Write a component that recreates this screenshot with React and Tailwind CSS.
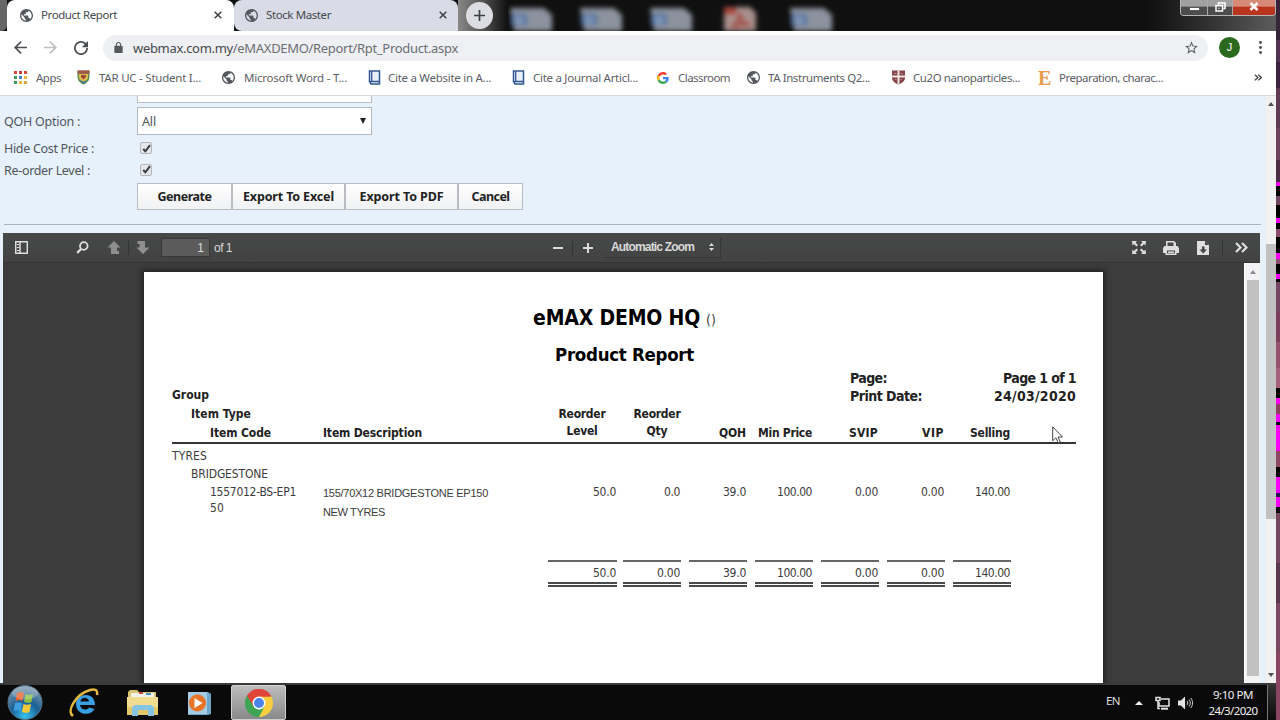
import React, { useLayoutEffect, useRef } from "react";

// Single-line label whose letter spacing is adjusted so it spans exactly `w` pixels.
function Txt({ w, className = "", children }) {
  const ref = useRef(null);
  useLayoutEffect(() => {
    const el = ref.current;
    el.style.letterSpacing = "0px";
    const natural = el.getBoundingClientRect().width;
    el.style.letterSpacing = (w - natural) / el.textContent.length + "px";
  }, [w, children]);
  return (
    <span ref={ref} className={"inline-block whitespace-nowrap " + className}>
      {children}
    </span>
  );
}

function Globe() {
  return (
    <svg viewBox="2 2 20 20" className="size-[13px]" fill="#55585d">
      <path d="M12 2C6.48 2 2 6.48 2 12s4.48 10 10 10 10-4.48 10-10S17.52 2 12 2zm-1 17.93c-3.95-.49-7-3.85-7-7.93 0-.62.08-1.21.21-1.79L9 15v1c0 1.1.9 2 2 2v1.93zm6.9-2.54c-.26-.81-1-1.39-1.9-1.39h-1v-3c0-.55-.45-1-1-1H8v-2h2c.55 0 1-.45 1-1V7h2c1.1 0 2-.9 2-2v-.41c2.93 1.19 5 4.06 5 7.41 0 2.08-.8 3.97-2.1 5.39z" />
    </svg>
  );
}

function CloseX() {
  return (
    <svg viewBox="0 0 8 8" className="size-2" stroke="#3c4043" strokeWidth="1.5">
      <path d="M.7.7l6.6 6.6M7.3.7L.7 7.3" />
    </svg>
  );
}

function AppsIcon() {
  const c = ["#e0483c", "#c8443a", "#d9483c", "#3f9a55", "#4a7fd0", "#e8b93a", "#3f9a55", "#e8b93a", "#dba63a"];
  return (
    <svg viewBox="0 0 13 13" className="size-[13px]">
      {c.map((f, i) => (
        <rect key={i} x={(i % 3) * 5} y={Math.floor(i / 3) * 5} width="3" height="3" fill={f} />
      ))}
    </svg>
  );
}

function Crest() {
  return (
    <svg viewBox="0 0 13 15" className="h-[15px] w-[13px]">
      <path d="M.5.5h12v6c0 4-2.500 6.500-6 8-3.500-1.500-6-4-6-8z" fill="#5f8a50" />
      <path d="M.5.5h12v3.200H.5z" fill="#a8564a" />
      <path d="M2 4h9v3c0 2.500-2 4-4.500 5.500C4 11 2 9.500 2 7z" fill="#d8c04a" />
      <path d="M4 5h5v2L6.500 9.500 4 7z" fill="#a5443c" />
      <path d="M2.500 10l4 1.500 4-1.500-4 4z" fill="#3f7f9a" />
    </svg>
  );
}

function Book() {
  return (
    <svg viewBox="0 0 13 15" className="h-[15px] w-[13px]" fill="none">
      <path d="M1.500 12.500V1h10v10.500H3a1.500 1.500 0 000 2.500h8.500v-2" fill="#e9f0fa" stroke="#31558f" strokeWidth="1.500" />
      <path d="M3.700 1.500v10" stroke="#31558f" strokeWidth="1.300" />
    </svg>
  );
}

function GoogleG() {
  return (
    <svg viewBox="0 0 48 48" className="size-3">
      <path fill="#EA4335" d="M24 9.500c3.540 0 6.710 1.220 9.210 3.600l6.850-6.850C35.900 2.380 30.470 0 24 0 14.620 0 6.510 5.380 2.560 13.220l7.980 6.190C12.430 13.720 17.740 9.500 24 9.500z" />
      <path fill="#4285F4" d="M46.980 24.550c0-1.570-.15-3.090-.38-4.550H24v9.020h12.940c-.58 2.960-2.260 5.480-4.780 7.180l7.730 6c4.510-4.180 7.090-10.360 7.090-17.650z" />
      <path fill="#FBBC05" d="M10.530 28.590A14.500 14.500 0 019.770 24c0-1.600.27-3.140.76-4.590l-7.980-6.190A24 24 0 000 24c0 3.880.92 7.540 2.560 10.780z" />
      <path fill="#34A853" d="M24 48c6.480 0 11.930-2.130 15.890-5.810l-7.730-6c-2.150 1.450-4.920 2.300-8.160 2.300-6.260 0-11.570-4.220-13.470-9.910l-7.980 6.190C6.510 42.620 14.620 48 24 48z" />
    </svg>
  );
}

function RedShield() {
  return (
    <svg viewBox="0 0 13 15" className="h-[15px] w-[13px]">
      <path d="M0 .5h13v7c0 3.500-2.500 5.500-6.500 7-4-1.500-6.500-3.500-6.500-7z" fill="#85434a" />
      <path d="M6.500.5v14M0 6.500h13" stroke="#efe3e0" strokeWidth="2" />
      <path d="M2 3.500h2.500M8.500 3.500H11M3 9.500h1.500M8.500 9.500H10" stroke="#b58a86" />
    </svg>
  );
}

const bookmarks = [
  { slot: "w-[63px]", gap: "w-[22px]", icon: <AppsIcon />, label: "Apps", w: 25 },
  { slot: "w-[145px]", gap: "w-[22px]", icon: <Crest />, label: "TAR UC - Student I...", w: 102 },
  { slot: "w-[146px]", gap: "w-[22px]", icon: <Globe />, label: "Microsoft Word - T...", w: 103 },
  { slot: "w-[144px]", gap: "w-5", icon: <Book />, label: "Cite a Website in A...", w: 103 },
  { slot: "w-[145px]", gap: "w-[21px]", icon: <Book />, label: "Cite a Journal Articl...", w: 105 },
  { slot: "w-[90px]", gap: "w-[21px]", icon: <GoogleG />, label: "Classroom", w: 52 },
  { slot: "w-[145px]", gap: "w-[21px]", icon: <Globe />, label: "TA Instruments Q2...", w: 102 },
  { slot: "w-[146px]", gap: "w-[21px]", icon: <RedShield />, label: "Cu2O nanoparticles...", w: 107 },
  {
    slot: "w-[215px]",
    gap: "w-[21px]",
    icon: <span className="font-['Liberation_Serif',serif] text-[20px] font-bold leading-[16px] text-[#e99a4a]">E</span>,
    label: "Preparation, charac...",
    w: 104,
  },
];

function DesktopDoc({ pdf }) {
  return (
    <svg viewBox="0 0 44 26" className="h-[26px] w-11 blur-[2.500px]">
      {pdf ? (
        <>
          <path d="M6 2h26l6 6v18H6z" fill="#a8908c" />
          <path d="M6 2h12v7H6z" fill="#a8443c" />
          <path d="M14 22c6-4 8-9 7-14 2 8 5 11 11 12-6-1-12 0-18 2z" fill="none" stroke="#a5342e" strokeWidth="2" />
        </>
      ) : (
        <>
          <path d="M2 3h34l8 7v16H6z" fill="#8d939e" />
          <path d="M3 9h16v11H3z" fill="#53729f" />
          <path d="M6 12l3 6 2-6 2 6 3-6" stroke="#a3b3cb" strokeWidth="1.500" fill="none" />
        </>
      )}
    </svg>
  );
}

function TabStrip() {
  return (
    <div className="flex h-[31px] bg-[#101010]">
      <div className="w-[7px] rounded-br-md bg-[#666]" />
      <div className="flex w-[227px] items-center rounded-t-lg bg-white pb-px pl-[13px]">
        <Globe />
        <Txt w={76} className="ml-2 text-[11.5px] leading-4 text-[#45484d]">Product Report</Txt>
        <div className="ml-[97px]"><CloseX /></div>
      </div>
      <div className="flex w-[224px] items-center rounded-t-lg rounded-bl-lg bg-[#d9dce6] pb-px pl-[11px]">
        <Globe />
        <Txt w={65} className="ml-2 text-[11.5px] leading-4 text-[#45484d]">Stock Master</Txt>
        <div className="ml-[108px]"><CloseX /></div>
      </div>
      <div className="flex w-[50px] items-center bg-linear-to-r from-[#888] via-[#555] to-[#101010] pb-px pl-2">
        <div className="flex size-[27px] items-center justify-center rounded-full bg-[#dcdde3]">
          <svg viewBox="0 0 11 11" className="size-[11px]" stroke="#3c4043" strokeWidth="1.700"><path d="M5.500 0v11M0 5.500h11" /></svg>
        </div>
      </div>
      <div className="flex w-[340px] items-end gap-[26px] overflow-hidden">
        <DesktopDoc />
        <DesktopDoc />
        <DesktopDoc />
        <DesktopDoc pdf />
        <DesktopDoc />
      </div>
      <div className="flex flex-1 items-start justify-end bg-linear-to-r from-[#101010] from-70% to-[#5c5c5c]">
        <div className="flex h-4 overflow-hidden rounded-b-[4px] border border-t-0 border-[#b5b5b5]">
          <div className="flex w-[27px] items-center justify-center border-r border-[#aaa] bg-linear-to-b from-[#a0a0a0] from-40% to-[#4c4c4c] to-50%">
            <div className="mt-[2px] h-[4px] w-[11px] border border-[#555] bg-white" />
          </div>
          <div className="flex w-[25px] items-center justify-center border-r border-[#aaa] bg-linear-to-b from-[#a0a0a0] from-40% to-[#4c4c4c] to-50%">
            <svg viewBox="0 0 11 10" className="mb-[2px] h-[10px] w-[11px]" fill="none" stroke="#fff" strokeWidth="1.500"><path d="M3.500 2.500V1H10v5.500H8.500M1 3.500h6.500V9H1zM4 5.700v1" /></svg>
          </div>
          <div className="flex w-[42px] items-center justify-center bg-linear-to-b from-[#d88a78] from-40% to-[#b8341c] to-50%">
            <svg viewBox="0 0 10 9" className="mb-[2px] h-[9px] w-[10px]" stroke="#fff" strokeWidth="2.600"><path d="M1.500 1l7 7M8.500 1l-7 7" /></svg>
          </div>
        </div>
      </div>
    </div>
  );
}

function AddressBar() {
  return (
    <div className="flex h-[31px] items-center bg-white pt-[2px]">
      <svg viewBox="4 4 16 16" className="ml-[14px] size-[13px]" fill="#4a4d51"><path d="M20 11H7.830l5.590-5.590L12 4l-8 8 8 8 1.410-1.410L7.830 13H20v-2z" /></svg>
      <svg viewBox="4 4 16 16" className="ml-[17px] size-[13px]" fill="#bdbfc2"><path d="M12 4l-1.410 1.410L16.170 11H4v2h12.170l-5.580 5.590L12 20l8-8z" /></svg>
      <svg viewBox="4 4 16 16" className="ml-[17px] size-[14px]" fill="#4a4d51"><path d="M17.650 6.350A7.960 7.960 0 0012 4a8 8 0 108 8h-2a6 6 0 11-6-6c1.660 0 3.140.69 4.220 1.780L13 11h7V4l-2.350 2.350z" /></svg>
      <div className="ml-[15px] flex h-[26px] w-[1105px] items-center rounded-full bg-[#eff0f3] pl-[11px] pr-[10px]">
        <svg viewBox="4 1 16 21" className="h-[11px] w-[9px]" fill="#55585d"><path d="M18 8h-1V6c0-2.760-2.240-5-5-5S7 3.240 7 6v2H6c-1.100 0-2 .9-2 2v10c0 1.100.9 2 2 2h12c1.100 0 2-.9 2-2V10c0-1.100-.9-2-2-2zM9 8V6a3 3 0 016 0v2z" /></svg>
        <Txt w={325} className="ml-[10px] text-[13px] leading-5 text-[#6b6e73]">
          <span className="text-[#46494e]">webmax.com.my</span>/eMAXDEMO/Report/Rpt_Product.aspx
        </Txt>
        <div className="flex-1" />
        <svg viewBox="2 2 20 19" className="size-[13px]" fill="#5b5e63"><path d="M22 9.240l-7.190-.62L12 2 9.190 8.630 2 9.240l5.460 4.730L5.820 21 12 17.270 18.180 21l-1.630-7.030L22 9.240zM12 15.400l-3.760 2.270 1-4.280-3.320-2.880 4.380-.38L12 6.100l1.710 4.040 4.380.38-3.320 2.880 1 4.280L12 15.400z" /></svg>
      </div>
      <div className="ml-[11px] flex size-[21px] items-center justify-center rounded-full bg-[#2b6a1d] pb-px font-['Liberation_Sans',sans-serif] text-[11px] leading-none text-white">J</div>
      <svg viewBox="0 0 3 13" className="ml-[19px] h-[13px] w-[3px]" fill="#4a4d51"><circle cx="1.500" cy="1.500" r="1.400" /><circle cx="1.500" cy="6.500" r="1.400" /><circle cx="1.500" cy="11.500" r="1.400" /></svg>
    </div>
  );
}

function Bookmarks() {
  return (
    <div className="flex h-[34px] items-center border-b border-[#d7dbe0] bg-white pb-[2px] pl-[14px]">
      {bookmarks.map((b, i) => (
        <div key={i} className={"flex shrink-0 items-center " + b.slot}>
          <div className={"flex shrink-0 items-center " + b.gap}>{b.icon}</div>
          <Txt w={b.w} className="text-[11.5px] leading-4 text-[#5d6065]">{b.label}</Txt>
        </div>
      ))}
      <svg viewBox="0 0 8 7" className="ml-px h-[7px] w-2" fill="none" stroke="#3c4043" strokeWidth="1.300"><path d="M.8.600l3 2.900-3 2.900M4.200.600l3 2.900-3 2.900" /></svg>
    </div>
  );
}

function Check() {
  return (
    <div className="mb-px flex size-3 items-center justify-center rounded-[2px] border border-[#b4b8bd] bg-[#e4e6ea]">
      <svg viewBox="0 0 9 9" className="size-[9px] shrink-0" fill="none" stroke="#3a3d42" strokeWidth="2"><path d="M1.200 5l2.200 2.300L8 1.200" /></svg>
    </div>
  );
}

const btn = "flex h-[27px] items-center justify-center border border-[#b9bdc3] bg-linear-to-b from-white to-[#f0f1f3] pt-px text-[12.500px] font-bold text-[#222]";

function FilterForm() {
  return (
    <div className="flex h-[137px] flex-col text-[#50555b]">
      <div className="ml-[137px] h-[7px] w-[235px] border border-t-0 border-[#b9bfc6] bg-white" />
      <div className="mt-1 flex h-7 items-center pl-1 text-[12.500px]">
        <div className="w-[133px] pt-[2px]"><Txt w={76}>QOH Option :</Txt></div>
        <div className="flex h-7 w-[235px] items-center justify-between border border-[#b3b9c0] bg-white pl-1 pr-[5px]">
          <Txt w={14} className="mt-[3px]">All</Txt>
          <svg viewBox="0 0 6 6" className="size-[6px]" fill="#222"><path d="M0 0h6L3 6z" /></svg>
        </div>
      </div>
      <div className="mt-[3px] flex h-[21px] items-center pl-1 text-[12.500px]">
        <div className="w-[136px] pt-[2px]"><Txt w={90}>Hide Cost Price :</Txt></div>
        <Check />
      </div>
      <div className="flex h-[22px] items-center pl-1 text-[12.500px]">
        <div className="w-[136px] pt-[2px]"><Txt w={86}>Re-order Level :</Txt></div>
        <Check />
      </div>
      <div className="mt-[2px] flex pl-[137px]">
        <div className={btn + " w-[95px]"}><Txt w={54}>Generate</Txt></div>
        <div className={btn + " w-[113px]"}><Txt w={91}>Export To Excel</Txt></div>
        <div className={btn + " w-[113px]"}><Txt w={84}>Export To PDF</Txt></div>
        <div className={btn + " w-[65px]"}><Txt w={38}>Cancel</Txt></div>
      </div>
      <div className="ml-1 mt-[14px] h-px w-[1257px] bg-[#a9b3c2]" />
    </div>
  );
}

function PdfToolbar() {
  return (
    <div className="flex h-[30px] items-center border-b border-[#353535] bg-linear-to-b from-[#474949] to-[#424242] font-['Liberation_Sans',sans-serif] text-[12px] font-bold text-[#d9d9d9]">
      <svg viewBox="0 0 13 13" className="ml-3 size-[13px]" fill="none" stroke="#dedede" strokeWidth="1.500"><path d="M.7.7h11.600v11.600H.7zM5 1v11" /><path d="M2 3.500h2M2 6.500h2M2 9.500h2" strokeWidth="1" /></svg>
      <svg viewBox="0 0 13 13" className="ml-[48px] size-[13px]" fill="none" stroke="#dedede"><circle cx="7.800" cy="5" r="3.800" strokeWidth="1.800" /><path d="M5 8L1.200 11.800" strokeWidth="2.400" /></svg>
      <svg viewBox="0 0 14 13" className="ml-[18px] h-[13px] w-[14px]" fill="#8f8f8f"><path d="M7 0l6.500 6.500H10V10h2v3H4V6.500H.5z" /></svg>
      <div className="ml-[7px] h-[14px] w-px bg-[#343434]" />
      <svg viewBox="0 0 14 13" className="ml-[7px] h-[13px] w-[14px]" fill="#8f8f8f"><path d="M1.500 0H9v6.500h4.500L7 13 .5 6.500h3V3h-2z" /></svg>
      <div className="ml-[11px] flex h-[19px] w-[49px] items-center justify-end border border-[#383838] bg-[#5b5b5b] pr-[5px] font-normal">1</div>
      <Txt w={18} className="ml-1 font-normal">of 1</Txt>
      <div className="ml-[321px] h-[2px] w-[10px] bg-[#dcdcdc]" />
      <div className="ml-[9px] h-[14px] w-px bg-[#343434]" />
      <svg viewBox="0 0 10 10" className="ml-[10px] size-[10px]" stroke="#dcdcdc" strokeWidth="2"><path d="M5 0v10M0 5h10" /></svg>
      <div className="ml-3 flex h-5 w-[116px] items-center justify-between border-b border-r border-[#373737] pl-[6px] pr-[6px]">
        <Txt w={83} className="text-[12px]">Automatic Zoom</Txt>
        <svg viewBox="0 0 5 8" className="h-2 w-[5px]" fill="#dcdcdc"><path d="M0 3L2.500 0 5 3zM0 5h5L2.500 8z" /></svg>
      </div>
      <div className="flex-1" />
      <svg viewBox="0 0 14 13" className="h-[13px] w-[14px]" fill="#dedede"><path d="M0 0h5L3.500 1.500 6 4 4.500 5.500 2 3 .5 4.500zM14 0H9l1.500 1.500L8 4l1.500 1.500L12 3l1.500 1.500zM0 13h5l-1.500-1.500L6 9 4.500 7.500 2 10 .5 8.500zM14 13H9l1.500-1.500L8 9l1.500-1.500L12 10l1.500-1.500z" /></svg>
      <svg viewBox="0 0 16 14" className="ml-[17px] h-[14px] w-4" fill="#dedede"><path d="M3 0h8l2 2v3h1.500L16 7v5h-2.500v2h-11v-2H0V7l1.500-2H3z" /><path d="M4.500 1.500h6v3.500h-6zM4 9.500h8v3H4z" fill="#4a4a4a" /><path d="M5 10.500h6v1.500H5z" fill="#dedede" /></svg>
      <svg viewBox="0 0 12 14" className="ml-[18px] h-[14px] w-3" fill="#dedede"><path d="M0 0h8l4 4v10H0z" /><path d="M8 0l4 4H8zM5 5.500h2.500v3H10L6.200 12.500 2.500 8.500H5z" fill="#444" /></svg>
      <div className="ml-[13px] h-[16px] w-px bg-[#343434]" />
      <svg viewBox="0 0 13 11" className="ml-[12px] mr-3 h-[11px] w-[13px]" fill="none" stroke="#dedede" strokeWidth="2.200"><path d="M1 1l4.500 4.500L1 10M7 1l4.500 4.500L7 10" /></svg>
    </div>
  );
}

const columns = "grid grid-cols-[75px_66px_66px_66px_66px_66px_58px]";
const numbers = [
  ["50.0", "50.0", 23, 23, "w-[68px]", "w-[69px]"],
  ["0.0", "0.00", 16, 23, "w-[57px]", "w-[58px]"],
  ["39.0", "39.0", 23, 23, "w-[57px]", "w-[58px]"],
  ["100.00", "100.00", 35, 35, "w-[57px]", "w-[58px]"],
  ["0.00", "0.00", 23, 23, "w-[57px]", "w-[58px]"],
  ["0.00", "0.00", 23, 23, "w-[57px]", "w-[58px]"],
  ["140.00", "140.00", 35, 35, "w-[57px]", "w-[58px]"],
];
const heads = [["QOH", 27], ["Min Price", 54], ["SVIP", 29], ["VIP", 22], ["Selling", 40]];

function Report() {
  return (
    <div className="ml-[141px] mt-[9px] h-[411px] w-[959px] bg-white pl-7 pt-[31px] font-['DejaVu_Sans_Condensed','DejaVu_Sans',sans-serif] text-[12px] text-[#3c3c3c] shadow-[0_0_5px_2px_rgba(15,15,15,0.6)]">
      <div className="flex h-[30px] items-center pl-[361px]">
        <Txt w={167} className="text-[21px] font-bold leading-[30px] text-black">eMAX DEMO HQ</Txt>
        <Txt w={10} className="ml-[6px] mt-1 text-[14px]">()</Txt>
      </div>
      <div className="mt-2 flex h-7 items-center pl-[383px]">
        <Txt w={139} className="text-[18.500px] font-bold text-black">Product Report</Txt>
      </div>
      <div className="flex h-[75px] w-[904px] border-b-2 border-[#333] font-bold text-[#222]">
        <div className="w-[376px] pt-[17px] leading-[19px]">
          <div><Txt w={37}>Group</Txt></div>
          <div className="pl-[19px]"><Txt w={60}>Item Type</Txt></div>
          <div className="flex pl-[38px]">
            <div className="w-[113px]"><Txt w={61}>Item Code</Txt></div>
            <Txt w={99}>Item Description</Txt>
          </div>
        </div>
        <div className="w-[528px]">
          <div className="flex h-[18px] justify-between pl-[302px] text-[14px] leading-[18px]">
            <Txt w={37}>Page:</Txt>
            <Txt w={73}>Page 1 of 1</Txt>
          </div>
          <div className="flex h-[18px] justify-between pl-[302px] text-[14px] leading-[19px]">
            <Txt w={72}>Print Date:</Txt>
            <Txt w={82}>24/03/2020</Txt>
          </div>
          <div className={columns}>
            <div className="flex w-[68px] flex-col items-center pt-px leading-[17px]"><Txt w={47}>Reorder</Txt><Txt w={31}>Level</Txt></div>
            <div className="flex w-[68px] flex-col items-center pt-px leading-[17px]"><Txt w={47}>Reorder</Txt><Txt w={21}>Qty</Txt></div>
            {heads.map(([t, w]) => (
              <div key={t} className="w-[57px] pt-[19px] text-right leading-[18px]"><Txt w={w}>{t}</Txt></div>
            ))}
          </div>
        </div>
      </div>
      <div className="pt-[3px] leading-[18px]">
        <div><Txt w={35}>TYRES</Txt></div>
        <div className="pl-[19px]"><Txt w={77}>BRIDGESTONE</Txt></div>
        <div className="flex h-[77px]">
          <div className="flex w-[113px] flex-col items-start pl-[38px]">
            <Txt w={86}>1557012-BS-EP1</Txt>
            <Txt w={14} className="leading-[15px]">50</Txt>
          </div>
          <div className="ml-[38px] w-[225px] pt-px font-['Liberation_Sans',sans-serif] text-[11px] leading-[18px]">
            <div className="h-[19px]"><Txt w={165}>155/70X12 BRIDGESTONE EP150</Txt></div>
            <div><Txt w={62}>NEW TYRES</Txt></div>
          </div>
          <div className={columns}>
            {numbers.map((n, i) => (
              <div key={i} className={"text-right " + n[4]}><Txt w={n[2]}>{n[0]}</Txt></div>
            ))}
          </div>
        </div>
      </div>
      <div className={"pl-[376px] " + columns}>
        {numbers.map((n, i) => (
          <div key={i} className={n[5]}>
            <div className="h-[2px] bg-[#666]" />
            <div className={"h-5 pt-[2px] text-right leading-[18px] " + n[4]}><Txt w={n[3]}>{n[1]}</Txt></div>
            <div className="h-[5px] border-y-2 border-[#4a4a4a]" />
          </div>
        ))}
      </div>
    </div>
  );
}

function Taskbar() {
  return (
    <div className="flex h-[37px] items-center border-t-2 border-[#3a3a3a] bg-[#0a0a0a]">
      <svg viewBox="0 0 36 35" className="ml-[7px] h-[35px] w-9">
        <defs>
          <radialGradient id="orb" cx="50%" cy="90%" r="85%"><stop offset="0" stopColor="#35c4f2" /><stop offset=".5" stopColor="#1b5f95" /><stop offset="1" stopColor="#7c98ac" /></radialGradient>
        </defs>
        <circle cx="18" cy="17.500" r="17" fill="url(#orb)" stroke="#57758a" />
        <path d="M10 8c3-1.500 5-1 7 0l-1.500 8c-2.500-1.300-4.500-1.300-7 0z" fill="#e8622c" />
        <path d="M18.500 9c3 1.200 5 1 7.500 0l-1.500 8c-3 1.200-5 1-7.500 0z" fill="#8fc045" />
        <path d="M8 18c3-1.200 5-1 7 0l-1.500 8c-2.500-1.300-4.500-1.300-7 0z" fill="#3f9ee0" />
        <path d="M16.500 19c3 1.200 5 1 7.500 0l-1.500 8c-3 1.200-5 1-7.500 0z" fill="#f7c83a" />
        <ellipse cx="18" cy="8" rx="13" ry="6.500" fill="#fff" opacity=".22" />
      </svg>
      <svg viewBox="0 0 32 30" className="ml-[25px] h-[30px] w-8">
        <path d="M27 17H12c.5 5 7 6 9 2.500l5.500 1.500C22 29 8 27 8 16 8 5 27 3 27 17zM12.500 13.500H21c-.5-5-8-5-8.500 0z" fill="#3aa0e4" />
        <path d="M5 28C-2 23 8 6 22 2c5-1.500 8 0 7 5" fill="none" stroke="#e5b93c" strokeWidth="2.500" />
      </svg>
      <svg viewBox="0 0 32 28" className="ml-[27px] h-7 w-8">
        <path d="M1 3l2-2h7l2 2h17v6H1z" fill="#d9c474" /><path d="M4 4h23v6H4z" fill="#f2f2ea" />
        <path d="M12 3h4v2h-4z" fill="#c84a3a" /><path d="M19 4h5v2h-5z" fill="#4a90c8" />
        <path d="M0 8h31v18H0z" fill="#f0dd8f" /><path d="M0 18h31v8H0z" fill="#e3c86a" />
        <path d="M5 27v-9l3-2h16l3 2v9h-6v-6H11v6z" fill="#86c4e4" />
      </svg>
      <svg viewBox="0 0 26 26" className="ml-[27px] h-[26px] w-[26px]">
        <path d="M2 2h20l3 2v20l-3 1H2z" fill="#6fa6cc" /><path d="M2 2h19v22H2z" fill="#a5cbe3" />
        <circle cx="11.500" cy="13" r="8.500" fill="#e8742a" /><path d="M8.500 8l8 5-8 5z" fill="#fff" />
      </svg>
      <div className="ml-[19px] flex h-[35px] w-[55px] items-center justify-center rounded-[2px] border border-[#d0d0d0] bg-linear-to-b from-[#bdbdbd] to-[#8a8a8a]">
        <svg viewBox="0 0 28 28" className="size-7">
          <path d="M14 14L1.880 7A14 14 0 0126.120 7z" fill="#e0453a" />
          <path d="M14 14L26.120 7A14 14 0 0114 28z" fill="#fbcf3f" />
          <path d="M14 14v14A14 14 0 011.880 7z" fill="#3fa454" />
          <path d="M14 7.500h12.400L21 14l-1 4-6 10-3-6z" fill="#fbcf3f" />
          <path d="M1.880 7l6.500 11L14 20.500 14 7.500h12.400A14 14 0 001.880 7z" fill="#e0453a" />
          <path d="M1.880 7A14 14 0 0014 28l5.600-10.800-5 3.300L8.400 17.200z" fill="#3fa454" />
          <circle cx="14" cy="14" r="6.500" fill="#fff" /><circle cx="14" cy="14" r="5" fill="#4a84ea" />
        </svg>
      </div>
      <div className="flex-1" />
      <Txt w={14} className="mb-1 text-[11.500px] text-[#dcdcdc]">EN</Txt>
      <svg viewBox="0 0 8 4" className="ml-[15px] h-1 w-2" fill="#eee"><path d="M4 0l4 4H0z" /></svg>
      <svg viewBox="0 0 15 14" className="ml-3 h-[14px] w-[15px]" fill="none" stroke="#e4e4e4" strokeWidth="1.500"><path d="M6 3h8v7H4V6" /><path d="M6 12.700h7" strokeWidth="2" /><path d="M1 1.500h4v3H1zM3 5v7.500h2" /></svg>
      <svg viewBox="0 0 15 14" className="ml-[8px] h-[14px] w-[15px]" fill="#e4e4e4"><path d="M0 4.500h3L7 .5v13L3 9.500H0z" /><path d="M9 5c1 1.300 1 2.700 0 4M11 3.500c1.800 2.300 1.800 4.700 0 7M12.800 2c2.400 3.300 2.400 6.700 0 10" stroke="#d0d0d0" fill="none" strokeWidth="1" /></svg>
      <div className="ml-[15px] flex w-[50px] flex-col items-center text-[11.500px] leading-4 text-[#f0f0f0]">
        <Txt w={40}>9:10 PM</Txt>
        <Txt w={49}>24/3/2020</Txt>
      </div>
      <div className="ml-[9px] h-[35px] w-[9px] border-l border-[#777] bg-linear-to-b from-[#333] to-[#0c0c0c]" />
    </div>
  );
}

const strip = [
  ["#38243a", 40], ["#52334f", 22], ["#3c2140", 26], ["#5e3a55", 40], ["#6d4460", 32], ["#4b2c46", 22],
  ["#ff00ff", 4], ["#000", 10], ["#6f4560", 9], ["#000", 13], ["#ff00ff", 5], ["#000", 6], ["#8a4d70", 8], ["#000", 16], ["#ff00ff", 6], ["#8a4d70", 5],
  ["#000", 10], ["#ff00ff", 5], ["#000", 3], ["#754764", 30], ["#7b3d5b", 30], ["#99506f", 26], ["#a8607c", 20], ["#000", 10], ["#ff00ff", 6],
  ["#8d4160", 10], ["#ff00ff", 8], ["#000", 3], ["#ff00ff", 26], ["#8f4665", 16], ["#000", 10], ["#ff00ff", 16], ["#2a154a", 4], ["#ff00ff", 10], ["#000", 6],
  ["#74465f", 50], ["#5a3852", 40], ["#7c4763", 50], ["#8a4562", 67],
];

export default function App() {
  return (
    <div className="flex h-[720px] w-[1280px] overflow-hidden font-['Noto_Sans',sans-serif]">
      <div className="relative flex w-[1276px] flex-col">
        <TabStrip />
        <AddressBar />
        <Bookmarks />
        <div className="flex h-[587px] bg-[#e6f1fb]">
          <div className="w-[1266px]">
            <FilterForm />
            <div className="ml-[3px] w-[1257px]">
              <PdfToolbar />
              <div className="flex h-[420px] overflow-hidden bg-[#3c3c3c]">
                <div className="w-[1241px] shrink-0"><Report /></div>
                <div className="flex w-4 flex-col items-center border-l border-white bg-[#f3f3f5]">
                  <svg viewBox="0 0 6 4" className="mb-[6px] mt-[7px] h-1 w-[6px]" fill="#8d8d8d"><path d="M3 0l3 4H0z" /></svg>
                  <div className="h-[396px] w-3 bg-[#c1c1c1]" />
                </div>
              </div>
            </div>
          </div>
          <div className="flex w-[10px] flex-col items-center bg-[#f1f1f1]">
            <svg viewBox="0 0 6 4" className="mt-[6px] h-1 w-[6px]" fill="#505050"><path d="M3 0l3 4H0z" /></svg>
            <div className="mt-[138px] h-[275px] w-full bg-[#c1c1c1]" />
            <div className="flex-1" />
            <svg viewBox="0 0 6 4" className="mb-[6px] h-1 w-[6px]" fill="#505050"><path d="M0 0h6L3 4z" /></svg>
          </div>
        </div>
        <Taskbar />
        <svg viewBox="0 0 12 18" className="absolute left-[1052px] top-[426px] h-[18px] w-3" fill="#fff" stroke="#444" strokeWidth="1"><path d="M.700.800v14l3.200-3 2.300 5 2-1-2.200-4.800h4.500z" /></svg>
      </div>
      <div className="flex w-1 flex-col">
        {strip.map(([c, h], i) => (
          <div key={i} className="shrink-0" style={{ height: h, backgroundColor: c }} />
        ))}
      </div>
    </div>
  );
}
